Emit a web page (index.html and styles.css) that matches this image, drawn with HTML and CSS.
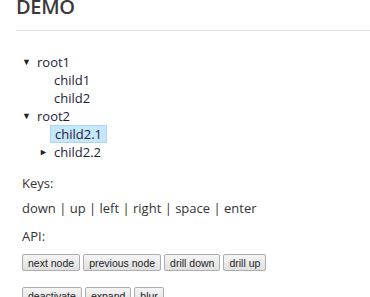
FILE: index.html
```html
<!DOCTYPE html>
<html lang="en">
<head>
    <meta charset="UTF-8">
    <title>Demo</title>
    <link rel="stylesheet" href="styles.css">
</head>
<body>
    <div class="page">
        <h1 class="title">DEMO</h1>
        <hr class="rule">

        <div class="content">
            <ul class="tree">
                <li class="node open">
                    <div class="label"><span class="toggle">&#9660;</span>root1</div>
                    <ul class="children">
                        <li class="node leaf"><div class="label">child1</div></li>
                        <li class="node leaf"><div class="label">child2</div></li>
                    </ul>
                </li>
                <li class="node open">
                    <div class="label"><span class="toggle">&#9660;</span>root2</div>
                    <ul class="children">
                        <li class="node leaf"><div class="label active">child2.1</div></li>
                        <li class="node closed"><div class="label"><span class="toggle">&#9658;</span>child2.2</div></li>
                    </ul>
                </li>
            </ul>

            <p class="section first">Keys:</p>
            <p class="keys">down | up | left | right | space | enter</p>
            <p class="section">API:</p>

            <div class="buttons">
                <button>next node</button>
                <button>previous node</button>
                <button>drill down</button>
                <button>drill up</button>
            </div>
            <div class="buttons second">
                <button>deactivate</button>
                <button>expand</button>
                <button>blur</button>
            </div>
        </div>
    </div>
</body>
</html>
```

FILE: styles.css
```css
body {
    margin: 0;
    font-family: "Open Sans", Arial, sans-serif;
    font-size: 13px;
    color: #333;
    background: #fff;
}

.page {
    padding-left: 16px;
}

.title {
    margin: 0;
    margin-top: -3px;
    font-size: 20px;
    font-weight: 600;
    line-height: 20px;
    letter-spacing: -0.3px;
    color: #3a3a3a;
}

.rule {
    margin: 13px 0 0;
    border: none;
    border-top: 1px solid #e2e2e2;
}

.content {
    padding-left: 6px;
}

.tree {
    list-style: none;
    margin: 22px 0 0;
    padding: 0;
}

.tree ul {
    list-style: none;
    margin: 0;
    padding: 0 0 0 17px;
}

.label {
    position: relative;
    display: inline-block;
    height: 18px;
    line-height: 18px;
    padding-left: 15px;
    color: #1d1d3b;
}

.toggle {
    position: absolute;
    left: 0;
    top: 0;
    font-size: 9px;
    color: #222;
}

.label.active {
    background: #c6e6fa;
    border: 1px solid #aed7f3;
    margin-left: 11px;
    padding: 0 4px;
    height: 16px;
    line-height: 16px;
}

.section,
.keys {
    margin: 0;
    line-height: 18px;
}

.section {
    margin-top: 10px;
}

.section.first {
    margin-top: 13px;
}

.keys {
    margin-top: 7px;
}

.buttons {
    display: flex;
    gap: 3px;
    margin-top: 9px;
}

.buttons.second {
    margin-top: 16px;
}

button {
    font-family: Arial, sans-serif;
    font-size: 10.5px;
    color: #222;
    padding: 0 5px;
    height: 17px;
    background: linear-gradient(#f5f5f5, #e0e0e0);
    border: 1px solid #adadad;
    border-radius: 2px;
}
```
